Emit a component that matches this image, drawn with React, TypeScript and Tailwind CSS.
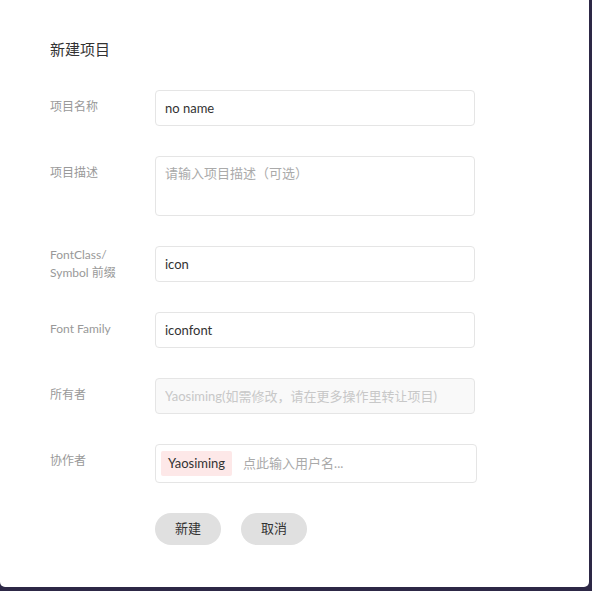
import React from 'react';

const font = { fontFamily: 'Lato, "Noto Sans CJK SC", sans-serif' };

const Row = ({ label, children, top = 'pt-[8px]' }: { label: React.ReactNode; children: React.ReactNode; top?: string }) => (
  <div className="flex items-start mb-[30px]">
    <div className={`w-[105px] shrink-0 ${top} text-[12px] leading-[18px] text-[#999]`}>{label}</div>
    {children}
  </div>
);

const inputCls =
  'w-[320px] h-[36px] border border-[#e5e5e5] rounded-[4px] px-[9px] text-[13px] text-[#333] outline-none bg-white';

export default function App() {
  return (
    <div className="w-full h-[591px] bg-[#2d2846]" style={font}>
      <div className="w-[589px] h-[587px] bg-white rounded-b-[5px] pl-[50px] pt-[38px]">
        <h2 className="text-[15px] leading-[22px] text-[#333] mb-[30px]">新建项目</h2>

        <Row label="项目名称">
          <input className={inputCls} defaultValue="no name" />
        </Row>

        <Row label="项目描述">
          <textarea
            className="w-[320px] h-[60px] border border-[#e5e5e5] rounded-[4px] px-[9px] py-[7px] text-[13px] text-[#333] placeholder:text-[#aaa] outline-none resize-none"
            placeholder="请输入项目描述（可选）"
          />
        </Row>

        <Row
          top="pt-0"
          label={
            <div>
              FontClass/
              <br />
              Symbol 前缀
            </div>
          }
        >
          <input className={inputCls} defaultValue="icon" />
        </Row>

        <Row label="Font Family">
          <input className={inputCls} defaultValue="iconfont" />
        </Row>

        <Row label="所有者">
          <input
            className="w-[320px] h-[36px] border border-[#e5e5e5] rounded-[4px] px-[9px] text-[13px] bg-[#f9f9f9] placeholder:text-[#c8c8c8] outline-none"
            placeholder="Yaosiming(如需修改，请在更多操作里转让项目)"
            disabled
          />
        </Row>

        <Row label="协作者">
          <div className="w-[322px] h-[39px] border border-[#e5e5e5] rounded-[4px] flex items-center pl-[5px]">
            <span className="h-[25px] px-[7px] bg-[#fde8e8] rounded-[2px] text-[13px] leading-[25px] text-[#333]">
              Yaosiming
            </span>
            <input
              className="ml-[11px] flex-1 text-[13px] placeholder:text-[#aaa] outline-none"
              placeholder="点此输入用户名..."
            />
          </div>
        </Row>

        <div className="flex gap-[20px] pl-[105px]">
          <button className="w-[66px] h-[32px] rounded-full bg-[#e0e0e0] text-[13px] text-[#333]">新建</button>
          <button className="w-[66px] h-[32px] rounded-full bg-[#e0e0e0] text-[13px] text-[#333]">取消</button>
        </div>
      </div>
    </div>
  );
}
